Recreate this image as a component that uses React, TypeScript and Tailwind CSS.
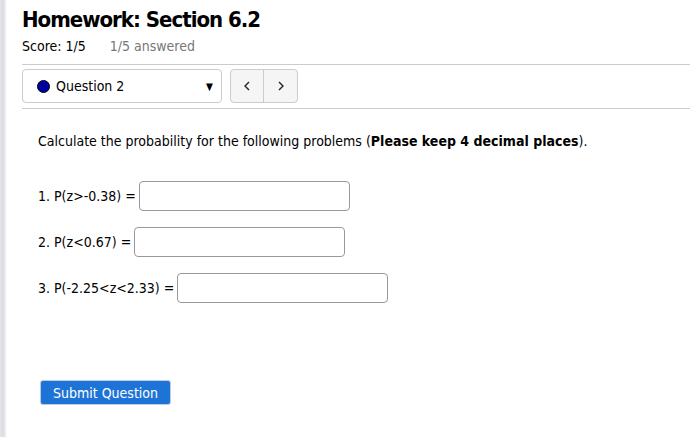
import React from "react";

const font = { fontFamily: '"DejaVu Sans Condensed", "DejaVu Sans", sans-serif' };

const problems = [
    { label: "1. P(z>-0.38) =" },
    { label: "2. P(z<0.67) =" },
    { label: "3. P(-2.25<z<2.33) =" },
];

function Chevron({ dir }: { dir: "left" | "right" }) {
    return (
        <svg width="8" height="10" viewBox="0 0 8 10" fill="none" stroke="#222" strokeWidth="1.4">
            {dir === "left" ? <path d="M6 1 L2 5 L6 9" /> : <path d="M2 1 L6 5 L2 9" />}
        </svg>
    );
}

export default function App() {
    return (
        <div className="relative w-[690px] h-[437px] bg-white text-black overflow-hidden" style={font}>
            {/* left shadow strip */}
            <div className="absolute left-0 top-0 h-full w-[7px] bg-gradient-to-r from-[#e4e4ea] via-[#dcdce4] to-white" />
            <div className="pl-[22px]">
                <h1 className="pt-[6px] text-[22px] leading-[28px] font-bold tracking-[-1px]">Homework: Section 6.2</h1>
                <div className="mt-[3px] flex text-[14px] leading-[18px]">
                    <span>Score: 1/5</span>
                    <span className="ml-[24px] text-[#777]">1/5 answered</span>
                </div>
                <div className="mt-[9px] border-t border-[#ccc]" />
                <div className="flex items-start pt-[4px] pb-[5px]">
                    <div className="flex items-center w-[200px] h-[34px] border border-[#ccc] rounded-[4px] px-[14px] text-[14px]">
                        <span className="w-[13px] h-[13px] rounded-full bg-[#0000a0] border border-black" />
                        <span className="ml-[6px]">Question 2</span>
                        <span className="ml-auto mr-[-6px] text-[10px]">▼</span>
                    </div>
                    <div className="ml-[8px] flex h-[34px] border border-[#ccc] rounded-[4px] bg-[#f5f5f5]">
                        <span className="w-[33px] flex items-center justify-center border-r border-[#ccc]">
                            <Chevron dir="left" />
                        </span>
                        <span className="w-[33px] flex items-center justify-center">
                            <Chevron dir="right" />
                        </span>
                    </div>
                </div>
                <div className="border-t border-[#ccc]" />
                <div className="pl-[16px] pt-[22px] text-[14px] leading-[20px]">
                    <p>
                        Calculate the probability for the following problems (<b>Please keep 4 decimal places</b>).
                    </p>
                    <div className="mt-[30px] flex flex-col gap-[16px]">
                        {problems.map((p, i) => (
                            <div key={i} className="flex items-center">
                                <span>{p.label}</span>
                                <input className="ml-[3px] w-[211px] h-[30px] border border-[#999] rounded-[4px]" />
                            </div>
                        ))}
                    </div>
                    <button className="mt-[77px] ml-[2px] h-[25px] px-[12px] bg-[#1d74d6] text-white text-[14px] rounded-[3px] border border-[#bcd]">
                        Submit Question
                    </button>
                </div>
            </div>
        </div>
    );
}
